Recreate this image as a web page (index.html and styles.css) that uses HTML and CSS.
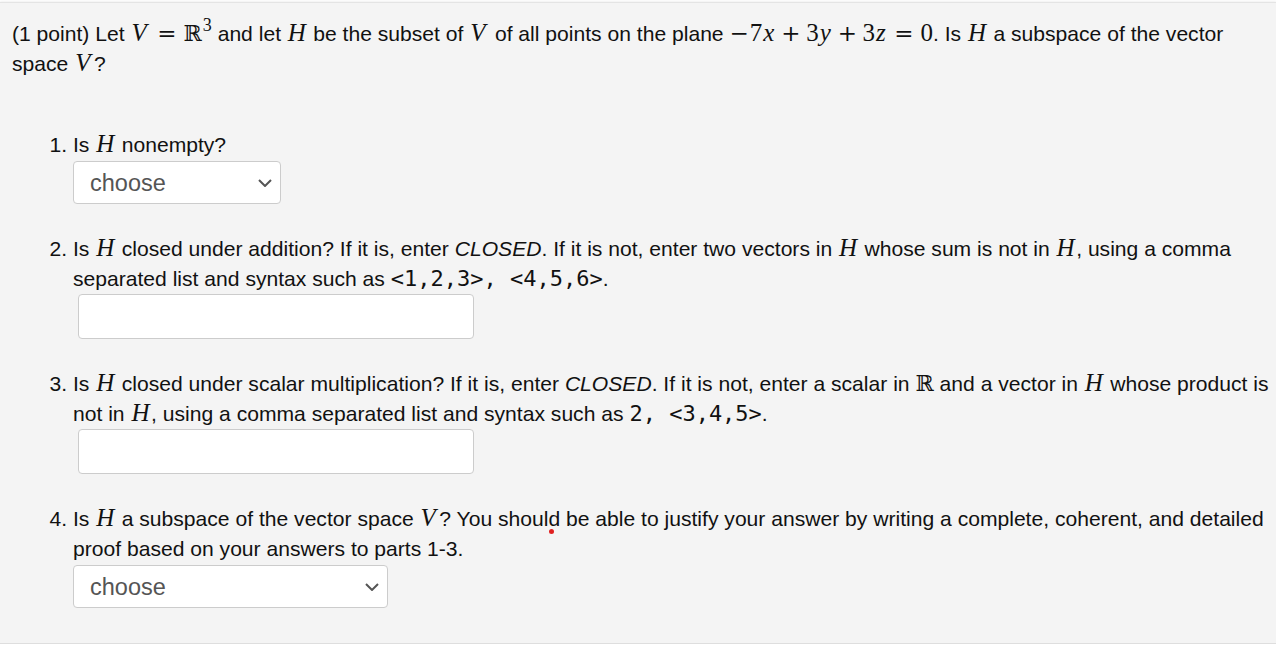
FILE: index.html
```html
<!DOCTYPE html>
<html lang="en">
<head>
<meta charset="utf-8">
<title>Subspace problem</title>
<link rel="stylesheet" href="styles.css">
</head>
<body>
<div class="problem">
  <p class="intro">(1 point) Let <span class="m"><i class="v">V</i><span class="rel">=</span><span class="bb">ℝ</span><sup>3</sup></span> and let <span class="m"><i>H</i></span> be the subset of <span class="m"><i class="v">V</i></span> of all points on the plane <span class="m"><span class="neg">−</span>7<i>x</i><span class="op">+</span>3<i>y</i><span class="op">+</span>3<i>z</i><span class="rel">=</span>0</span>. Is <span class="m"><i>H</i></span> a subspace of the vector space <span class="m"><i class="v">V</i></span>?</p>
  <ol class="parts">
    <li>
      <div class="q">Is <span class="m"><i>H</i></span> nonempty?</div>
      <div class="select narrow"><span>choose</span><svg class="chev" width="14" height="8" viewBox="0 0 14 8"><path d="M1 1 L7 7 L13 1" fill="none" stroke="#555" stroke-width="2"/></svg></div>
    </li>
    <li>
      <div class="q">Is <span class="m"><i>H</i></span> closed under addition? If it is, enter <em>CLOSED</em>. If it is not, enter two vectors in <span class="m"><i>H</i></span> whose sum is not in <span class="m"><i>H</i></span>, using a comma separated list and syntax such as <code>&lt;1,2,3&gt;, &lt;4,5,6&gt;</code>.</div>
      <input class="answer" type="text">
    </li>
    <li>
      <div class="q">Is <span class="m"><i>H</i></span> closed under scalar multiplication? If it is, enter <em>CLOSED</em>. If it is not, enter a scalar in <span class="m"><span class="bb">ℝ</span></span> and a vector in <span class="m"><i>H</i></span> whose product is not in <span class="m"><i>H</i></span>, using a comma separated list and syntax such as <code>2, &lt;3,4,5&gt;</code>.</div>
      <input class="answer" type="text">
    </li>
    <li>
      <div class="q">Is <span class="m"><i>H</i></span> a subspace of the vector space <span class="m"><i class="v">V</i></span>? You <span class="spell">should</span> be able to justify your answer by writing a complete, coherent, and detailed proof based on your answers to parts 1-3.</div>
      <div class="select wide"><span>choose</span><svg class="chev" width="14" height="8" viewBox="0 0 14 8"><path d="M1 1 L7 7 L13 1" fill="none" stroke="#555" stroke-width="2"/></svg></div>
    </li>
  </ol>
</div>
</body>
</html>
```
FILE: styles.css
```css
html, body {
  margin: 0;
  padding: 0;
  background: #ffffff;
}
body {
  font-family: "Liberation Sans", Arial, sans-serif;
  font-size: 21.1px;
  line-height: 30px;
  color: #111;
}
.problem {
  margin-top: 2px;
  background: #f4f4f4;
  border-top: 1px solid #e4e4e4;
  border-bottom: 1px solid #dedede;
  box-shadow: 0 -1px 2px rgba(0,0,0,0.06);
  padding: 16px 2px 35px 12px;
}
.intro {
  margin: 0 0 51px 0;
}
.m {
  font-family: "Liberation Serif", "Times New Roman", serif;
  font-size: 25px;
  line-height: 0;
  white-space: nowrap;
}
.m i {
  font-style: italic;
  padding: 0 0.06em 0 0.04em;
}
.m i.v {
  padding-right: calc(0.06em + 2px);
}
.m sup {
  font-size: 18px;
  line-height: 0;
  vertical-align: 10px;
  margin-left: 1px;
}
.bb {
  font-family: "DejaVu Serif", serif;
  font-size: 22px;
}
.neg, .op, .rel {
  font-family: "DejaVu Serif", serif;
  font-size: 23px;
}
.neg {
  margin-right: 1px;
}
.rel {
  margin: 0 7px;
}
.op {
  margin: 0 5.5px;
}
code {
  font-family: "DejaVu Sans Mono", "Liberation Mono", monospace;
  font-size: 22px;
  line-height: 0;
}
em {
  font-style: italic;
}
.parts {
  margin: 0;
  padding: 0 0 0 61px;
}
.parts li {
  margin-bottom: 30px;
}
.parts li:last-child {
  margin-bottom: 0;
}
.select {
  box-sizing: border-box;
  height: 43px;
  margin-top: 1px;
  background: #fff;
  border: 1px solid #cccccc;
  border-radius: 4px;
  display: flex;
  align-items: center;
  justify-content: space-between;
  padding: 0 8px 0 16px;
  color: #555;
  font-size: 23.5px;
}
.select.narrow { width: 208px; }
.select.wide { width: 315px; }
.chev {
  display: block;
  margin-top: 1px;
}
.answer {
  display: block;
  box-sizing: border-box;
  width: 396px;
  height: 45px;
  margin: 0 0 0 5px;
  background: #fff;
  border: 1px solid #cccccc;
  border-radius: 4px;
  font: inherit;
  padding: 0 10px;
}
.spell {
  position: relative;
}
.spell::after {
  content: "";
  position: absolute;
  left: 51px;
  top: 22px;
  width: 5px;
  height: 5px;
  border-radius: 50%;
  background: #e02020;
}
```
